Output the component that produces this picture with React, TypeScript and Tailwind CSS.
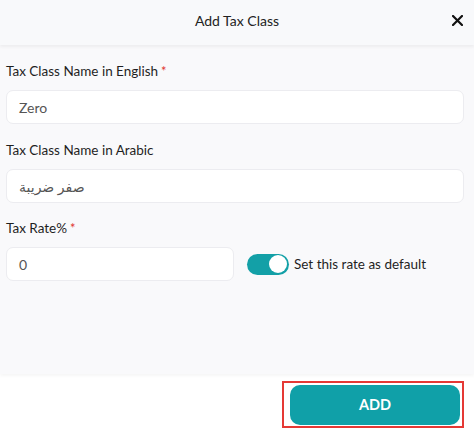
import React, { useState } from "react";

const font = { fontFamily: "Lato, 'Noto Sans', 'DejaVu Sans', sans-serif" };

function Label({ text, required }: { text: string; required?: boolean }) {
  return (
    <div className="h-[20px] flex items-center text-[13.5px] text-[#1f1f1f] leading-[20px]">
      <span>{text}</span>
      {required && <span className="text-[#e0342f] ml-[3px] text-[13px]">*</span>}
    </div>
  );
}

function Field({ value, className = "" }: { value: string; className?: string }) {
  return (
    <div
      className={`h-[34px] bg-white border border-[#ececf0] rounded-[7px] flex items-center px-[12px] text-[14px] text-[#555] ${className}`}
    >
      {value}
    </div>
  );
}

export default function App() {
  const [isDefault, setIsDefault] = useState(true);

  return (
    <div className="w-[474px] h-[433px] flex flex-col bg-white overflow-hidden" style={font}>
      {/* Header */}
      <header className="relative h-[45px] shrink-0 bg-[#f8f9fb] flex items-center justify-center shadow-[0_2px_3px_rgba(0,0,0,0.05)] z-10">
        <span className="text-[14px] text-[#222] pb-[4px]">Add Tax Class</span>
        <button className="absolute right-[8px] top-[11px] w-[18px] h-[18px] flex items-center justify-center">
          <svg width="11" height="11" viewBox="0 0 11 11">
            <path d="M1 1L10 10M10 1L1 10" stroke="#111" strokeWidth="2.2" strokeLinecap="round" />
          </svg>
        </button>
      </header>

      {/* Body */}
      <main className="flex-1 bg-[#f9f9fb] pl-[6px] pr-[10px] pt-[16px] shadow-[0_2px_3px_rgba(0,0,0,0.04)] z-[5]">
        <Label text="Tax Class Name in English" required />
        <Field value="Zero" className="mt-[9px]" />

        <div className="mt-[16px]">
          <Label text="Tax Class Name in Arabic" />
        </div>
        <Field value="صفر ضريبة" className="mt-[9px]" />

        <div className="mt-[15px]">
          <Label text="Tax Rate%" required />
        </div>
        <div className="mt-[9px] flex items-center">
          <Field value="0" className="w-[228px]" />
          <button
            onClick={() => setIsDefault(!isDefault)}
            className={`ml-[13px] w-[42px] h-[21px] rounded-full flex items-center px-[2px] ${
              isDefault ? "bg-[#13a0a7] justify-end" : "bg-[#ccc] justify-start"
            }`}
          >
            <span className="w-[18px] h-[18px] rounded-full bg-white" />
          </button>
          <span className="ml-[5px] text-[13.5px] text-[#1f1f1f]">Set this rate as default</span>
        </div>
      </main>

      {/* Footer */}
      <footer className="h-[59px] shrink-0 bg-white flex justify-end pr-[10px] pt-[7px]">
        <div className="border-2 border-[#e53935] pl-[6px] pr-[2px] pt-[2px] pb-[1px] h-[47px]">
          <button className="w-[170px] h-[40px] rounded-[10px] bg-[#10a0a8] text-white text-[14.5px] font-bold">
            ADD
          </button>
        </div>
      </footer>
    </div>
  );
}
